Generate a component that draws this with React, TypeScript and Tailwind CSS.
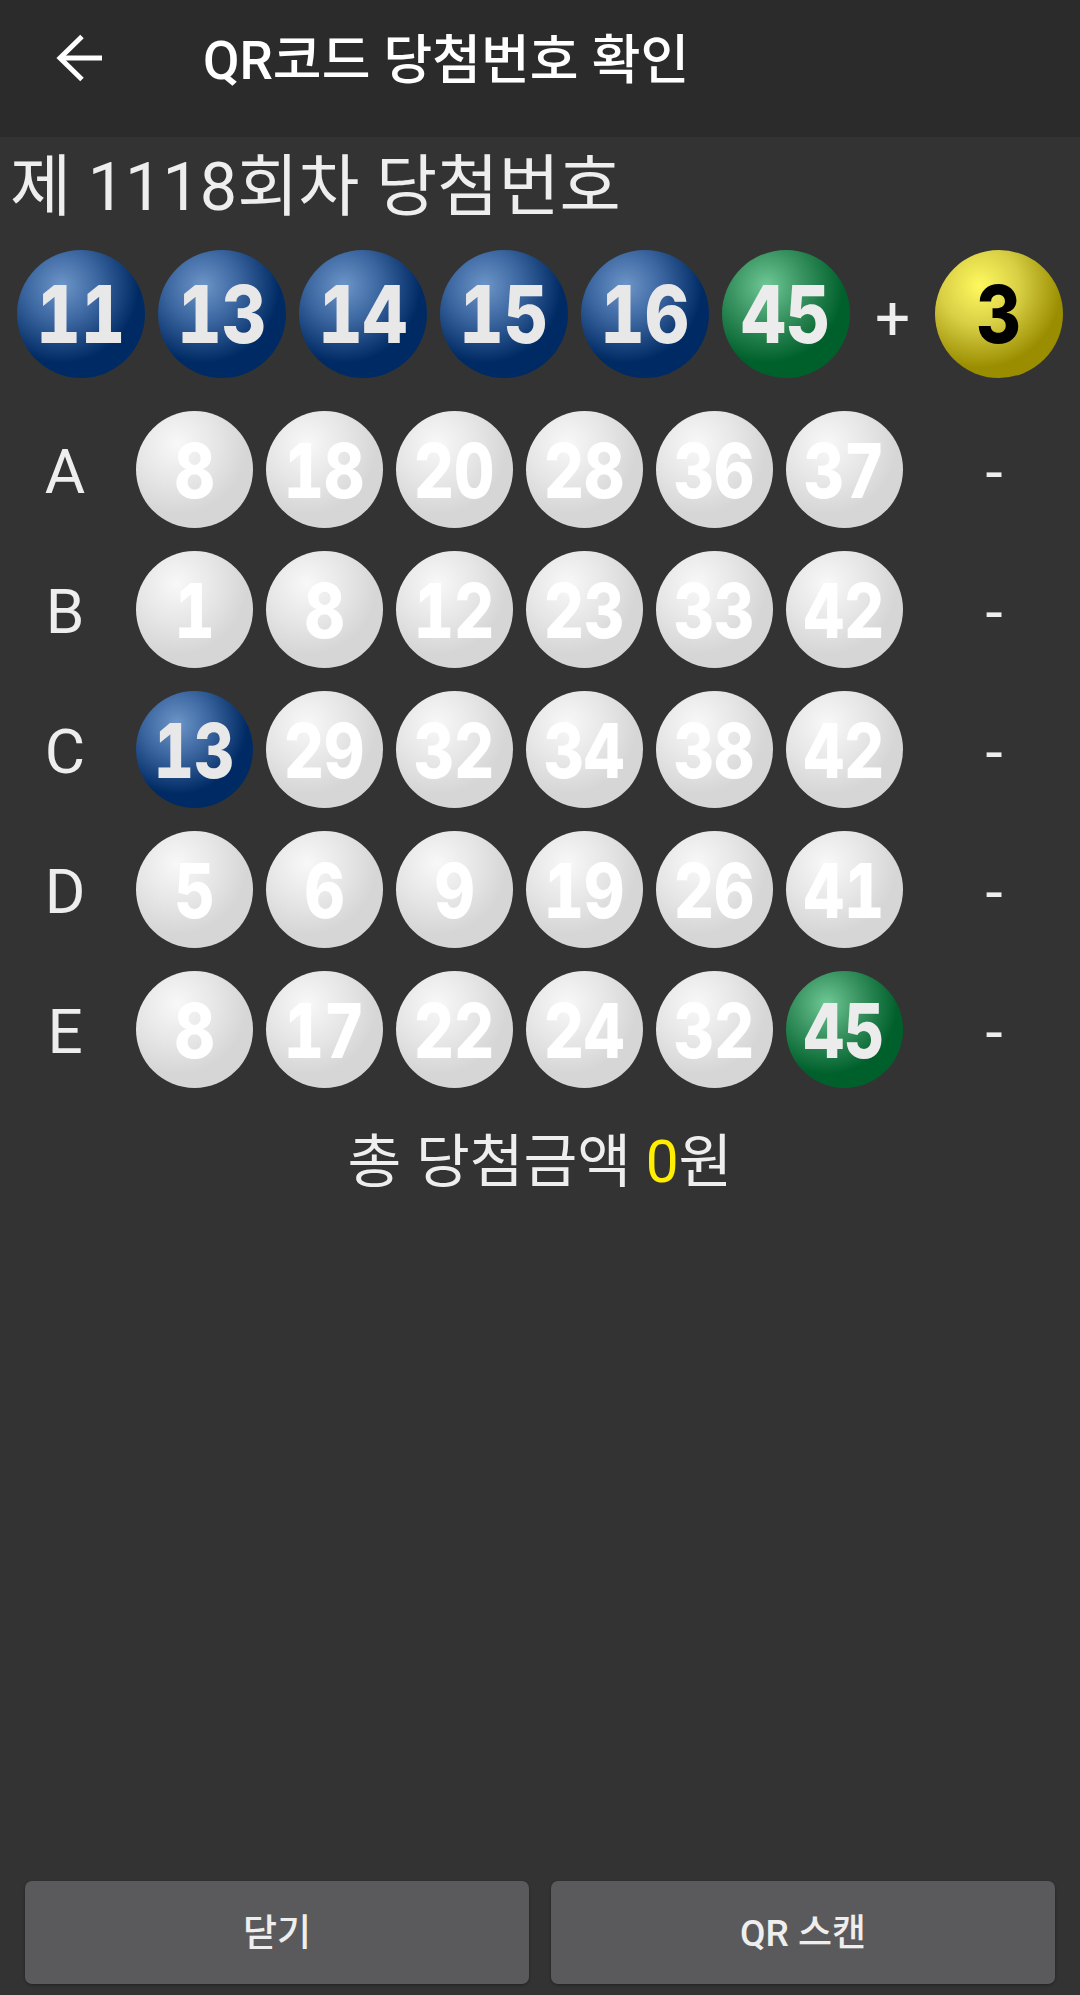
const FONT = "font-['Roboto','Noto_Sans_CJK_KR',sans-serif]";

const tones = {
  white: "bg-[radial-gradient(circle_at_35%_28%,#f8f8f8_0%,#e6e6e6_35%,#d6d6d6_62%)] text-white",
  blue: "bg-[radial-gradient(circle_at_35%_28%,#6d95c8_0%,#3a659f_30%,#002a64_62%)] text-[#e8e8e8]",
  green: "bg-[radial-gradient(circle_at_35%_28%,#6fc896_0%,#37925f_30%,#00602b_62%)] text-[#ececec]",
  yellow: "bg-[radial-gradient(circle_at_35%_28%,#fff95f_0%,#d8cf45_32%,#9a8d00_66%)] text-black",
};

type Tone = keyof typeof tones;

function Ball({ n, tone = "white", big = false }: { n: number; tone?: Tone; big?: boolean }) {
  return (
    <div
      className={`flex shrink-0 items-center justify-center rounded-full font-['Inter',sans-serif] font-extrabold tabular-nums ${
        big ? "h-[128px] w-[128px] text-[80px]" : "h-[117px] w-[117px] text-[76px]"
      } ${tones[tone]}`}
    >
      <span className={`inline-block leading-none ${big ? "scale-x-[0.86]" : "scale-x-[0.82]"}`}>{n}</span>
    </div>
  );
}

const rows: { label: string; nums: [number, Tone][] }[] = [
  { label: "A", nums: [[8, "white"], [18, "white"], [20, "white"], [28, "white"], [36, "white"], [37, "white"]] },
  { label: "B", nums: [[1, "white"], [8, "white"], [12, "white"], [23, "white"], [33, "white"], [42, "white"]] },
  { label: "C", nums: [[13, "blue"], [29, "white"], [32, "white"], [34, "white"], [38, "white"], [42, "white"]] },
  { label: "D", nums: [[5, "white"], [6, "white"], [9, "white"], [19, "white"], [26, "white"], [41, "white"]] },
  { label: "E", nums: [[8, "white"], [17, "white"], [22, "white"], [24, "white"], [32, "white"], [45, "green"]] },
];

export default function App() {
  return (
    <div className={`flex h-[1995px] w-[1080px] flex-col bg-[#333333] text-[#eeeeee] ${FONT}`}>
      <header className="flex h-[137px] shrink-0 items-start bg-[#2b2b2b] pt-[22px]">
        <div className="flex h-[72px] w-[203px] shrink-0 items-center pl-[55px]">
          <svg width="50" height="50" viewBox="0 0 50 50" fill="none" stroke="#ffffff" strokeWidth="5">
            <path d="M47 25H6" />
            <path d="M27 3.5L5 25l22 21.5" />
          </svg>
        </div>
        <h1 className="pt-[3px] text-[53px] font-medium leading-[72px] text-white">QR코드 당첨번호 확인</h1>
      </header>

      <main className="flex flex-1 flex-col">
        <div className="flex h-[113px] items-center pb-[12px] pl-[10px] text-[66.5px] leading-none">제 1118회차 당첨번호</div>

        <div className="flex items-center pl-[17px]">
          <div className="flex gap-[13px]">
            <Ball n={11} tone="blue" big />
            <Ball n={13} tone="blue" big />
            <Ball n={14} tone="blue" big />
            <Ball n={15} tone="blue" big />
            <Ball n={16} tone="blue" big />
            <Ball n={45} tone="green" big />
          </div>
          <div className="flex w-[85px] justify-center pt-[8px] text-[62px] leading-none">+</div>
          <Ball n={3} tone="yellow" big />
        </div>

        <div className="mt-[33px] flex flex-col gap-[23px]">
          {rows.map((r) => (
            <div key={r.label} className="flex items-center">
              <div className="w-[136px] shrink-0 pr-[6px] pt-[4px] text-center text-[62px] leading-none">{r.label}</div>
              <div className="flex shrink-0 gap-[13px]">
                {r.nums.map(([n, t], i) => (
                  <Ball key={i} n={n} tone={t} />
                ))}
              </div>
              <div className="w-[177px] shrink-0 pl-[5px] pt-[4px] text-center text-[62px] leading-none">-</div>
            </div>
          ))}
        </div>

        <div className="mt-[38px] text-center text-[58.5px] leading-[72px]">
          총 당첨금액 <span className="text-[#ffee00]">0</span>원
        </div>
      </main>

      <footer className="flex shrink-0 gap-[22px] px-[25px] pb-[11px]">
        <button className="h-[103px] flex-1 rounded-[7px] bg-[#5a5a5c] pt-[3px] text-[37px] font-medium text-[#eeeeee] shadow-[0_1px_3px_rgba(0,0,0,0.35)]">닫기</button>
        <button className="h-[103px] flex-1 rounded-[7px] bg-[#5a5a5c] pt-[3px] text-[37px] font-medium text-[#eeeeee] shadow-[0_1px_3px_rgba(0,0,0,0.35)]">QR 스캔</button>
      </footer>
    </div>
  );
}
